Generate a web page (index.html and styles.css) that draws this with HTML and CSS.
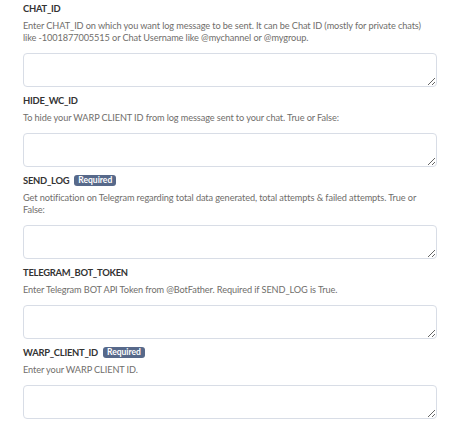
FILE: index.html
```html
<!DOCTYPE html>
<html lang="en">
<head>
  <meta charset="UTF-8" />
  <title>Config Vars</title>
  <link rel="stylesheet" href="styles.css">
</head>
<body>
  <div class="form">
    <div class="field">
      <label class="name">CHAT_ID</label>
      <p class="desc">Enter CHAT_ID on which you want log message to be sent. It can be Chat ID (mostly for private chats) like -1001877005515 or Chat Username like @mychannel or @mygroup.</p>
      <textarea class="input"></textarea>
    </div>
    <div class="field">
      <label class="name">HIDE_WC_ID</label>
      <p class="desc">To hide your WARP CLIENT ID from log message sent to your chat. True or False:</p>
      <textarea class="input"></textarea>
    </div>
    <div class="field">
      <label class="name">SEND_LOG <span class="badge">Required</span></label>
      <p class="desc">Get notification on Telegram regarding total data generated, total attempts &amp; failed attempts. True or False:</p>
      <textarea class="input"></textarea>
    </div>
    <div class="field">
      <label class="name">TELEGRAM_BOT_TOKEN</label>
      <p class="desc">Enter Telegram BOT API Token from @BotFather. Required if SEND_LOG is True.</p>
      <textarea class="input"></textarea>
    </div>
    <div class="field">
      <label class="name">WARP_CLIENT_ID <span class="badge">Required</span></label>
      <p class="desc">Enter your WARP CLIENT ID.</p>
      <textarea class="input"></textarea>
    </div>
  </div>
</body>
</html>
```
FILE: styles.css
```css
body {
  margin: 0;
  background: #fff;
  font-family: Lato, sans-serif;
}

.form {
  width: 414px;
  padding: 2px 0 0 23px;
}

.field {
  margin-bottom: 7px;
}

.name {
  display: block;
  font-size: 9.4px;
  font-weight: bold;
  letter-spacing: -0.25px;
  color: #333;
  line-height: 14px;
}

.badge {
  display: inline-block;
  margin-left: 3px;
  padding: 0 4px;
  background: #57698a;
  color: #fff;
  font-size: 8.5px;
  letter-spacing: 0;
  line-height: 11px;
  border-radius: 3px;
  vertical-align: 1px;
}

.desc {
  max-width: 404px;
  margin: 4px 0 9px;
  font-size: 9.2px;
  letter-spacing: -0.1px;
  line-height: 12px;
  color: #706e6b;
}

.input {
  display: block;
  box-sizing: border-box;
  width: 414px;
  height: 34px;
  border: 1px solid #d8dde6;
  border-radius: 4px;
  resize: vertical;
}
```
